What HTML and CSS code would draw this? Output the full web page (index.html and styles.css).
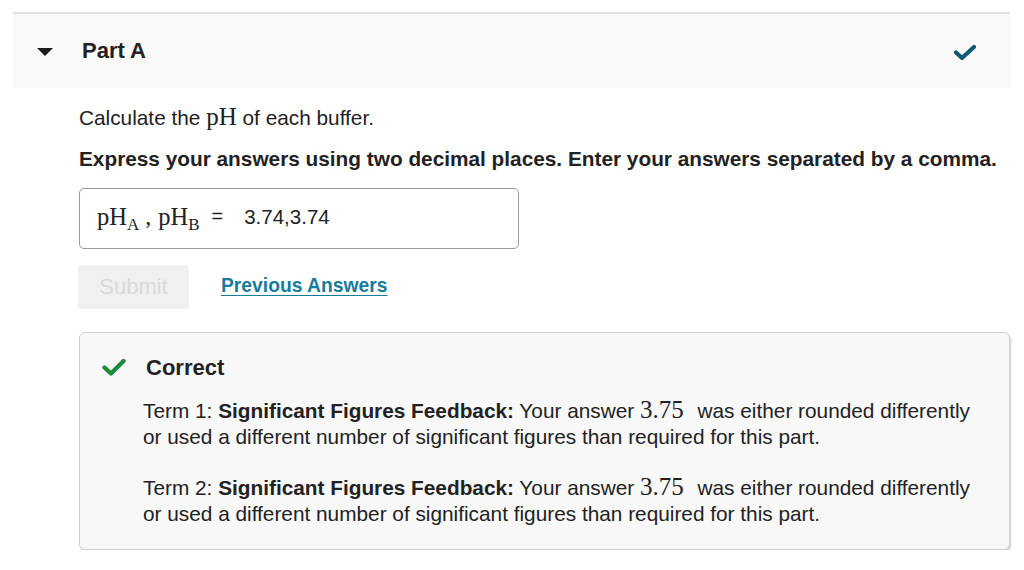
FILE: index.html
```html
<!DOCTYPE html>
<html>
<head>
<meta charset="utf-8">
<link rel="stylesheet" href="styles.css">
</head>
<body>
<div class="part">
  <div class="part-header">
    <span class="caret"></span>
    <span class="part-title">Part A</span>
    <svg class="done" width="22" height="16" viewBox="0 0 22 16"><path d="M2 8.5 L8 14 L20 3" fill="none" stroke="#125a73" stroke-width="4.2" stroke-linecap="round" stroke-linejoin="round"/></svg>
  </div>
  <div class="part-body">
    <p class="prompt">Calculate the <span class="math">pH</span> of each buffer.</p>
    <p class="instr">Express your answers using two decimal places. Enter your answers separated by a comma.</p>
    <div class="answer">
      <span class="math lbl">pH<sub>A</sub></span><span class="math comma">,</span><span class="math lbl">pH<sub>B</sub></span>
      <span class="eq">=</span>
      <span class="val">3.74,3.74</span>
    </div>
    <div class="actions">
      <button class="submit">Submit</button>
      <a class="prev" href="#">Previous Answers</a>
    </div>
    <div class="feedback">
      <div class="fb-head">
        <svg class="ok" width="24" height="18" viewBox="0 0 24 18"><path d="M2.5 9.5 L9 15.5 L21.5 3" fill="none" stroke="#1d8a3c" stroke-width="4.4" stroke-linecap="round" stroke-linejoin="round"/></svg>
        <span class="fb-title">Correct</span>
      </div>
      <p class="fb-text">Term 1: <b>Significant Figures Feedback:</b> Your answer <span class="math num">3.75</span> was either rounded differently or used a different number of significant figures than required for this part.</p>
      <p class="fb-text">Term 2: <b>Significant Figures Feedback:</b> Your answer <span class="math num">3.75</span> was either rounded differently or used a different number of significant figures than required for this part.</p>
    </div>
  </div>
</div>
</body>
</html>
```
FILE: styles.css
```css
html, body {
  margin: 0;
  padding: 0;
  background: #fff;
}
body {
  font-family: "Liberation Sans", Arial, sans-serif;
  color: #222;
  padding: 12px 14px 0 13px;
}
.part {
  border-top: 2px solid #e3e3e3;
}
.part-header {
  height: 74px;
  background: #f9f9f9;
  display: flex;
  align-items: center;
  padding: 0 0 0 24px;
}
.caret {
  width: 0;
  height: 0;
  border-left: 8px solid transparent;
  border-right: 8px solid transparent;
  border-top: 8px solid #1c1c1c;
  margin-top: 2px;
}
.part-title {
  font-weight: bold;
  font-size: 22px;
  margin-left: 29px;
  color: #222;
  flex: 1;
}
.done {
  margin-right: 34px;
  margin-top: 2px;
}
.part-body {
  padding: 16px 0 0 66px;
}
.math {
  font-family: "Liberation Serif", "DejaVu Serif", serif;
}
.prompt {
  margin: 0;
  font-size: 20.8px;
  line-height: 28px;
}
.prompt .math {
  font-size: 25px;
  line-height: 20px;
}
.instr {
  margin: 14px 0 0;
  font-size: 20.8px;
  font-weight: bold;
  line-height: 26px;
}
.answer {
  margin-top: 16px;
  width: 440px;
  height: 61px;
  box-sizing: border-box;
  border: 1px solid #9a9a9a;
  border-radius: 5px;
  display: flex;
  align-items: center;
  padding: 0 0 4px 17px;
  font-size: 20px;
}
.answer .lbl {
  font-size: 24.5px;
}
.answer sub {
  font-size: 17px;
  vertical-align: -5px;
  line-height: 0;
}
.answer .comma {
  font-size: 24px;
  margin: 0 7px 0 6px;
}
.eq {
  margin-left: 12px;
  font-size: 20px;
}
.val {
  margin-left: 21px;
  font-size: 20.5px;
}
.actions {
  display: flex;
  align-items: center;
  margin-top: 16px;
}
.submit {
  width: 111px;
  height: 44px;
  background: #f0f0f0;
  border: none;
  border-radius: 3px;
  color: #d9d9d9;
  font-family: "Liberation Sans", Arial, sans-serif;
  font-size: 22px;
  margin-left: -1px;
}
.prev {
  margin-left: 32px;
  color: #167c9c;
  font-weight: bold;
  font-size: 19.3px;
  text-decoration: underline;
  text-underline-offset: 3px;
  margin-top: -3px;
}
.feedback {
  margin-top: 23px;
  width: 931px;
  box-sizing: border-box;
  background: #f8f8f8;
  border: 1px solid #cfcfcf;
  border-radius: 6px;
  box-shadow: 1px 2px 2px rgba(0,0,0,0.18);
  padding: 22px 20px 22px 22px;
}
.fb-head {
  display: flex;
  align-items: center;
}
.ok {
  margin-top: -2px;
}
.fb-title {
  font-weight: bold;
  font-size: 22px;
  margin-left: 20px;
}
.fb-text {
  margin: 17px 0 0 41px;
  font-size: 20.8px;
  line-height: 26px;
}
.fb-text + .fb-text {
  margin-top: 25px;
}
.fb-text .math {
  font-size: 25px;
  line-height: 20px;
  margin-right: 8px;
}
```
